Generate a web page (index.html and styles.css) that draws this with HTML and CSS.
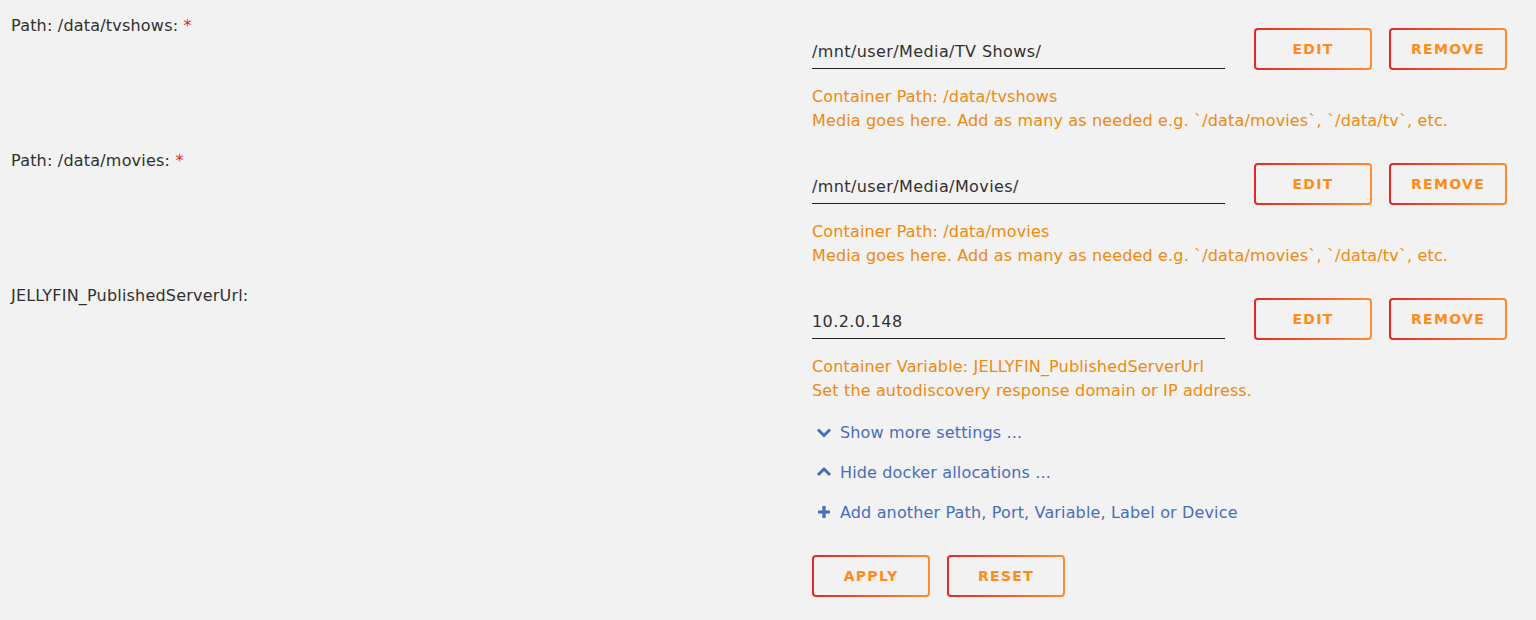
FILE: index.html
```html
<!DOCTYPE html>
<html lang="en">
<head>
  <meta charset="UTF-8" />
  <title>Docker Container - Jellyfin</title>
  <link rel="stylesheet" href="styles.css">
</head>
<body>

  <div class="settings">

    <div class="setting-row">
      <div class="setting-label">Path: /data/tvshows: <span class="required">*</span></div>
      <div class="setting-value">
        <div class="value-line">
          <input class="text-input" type="text" value="/mnt/user/Media/TV Shows/">
          <button class="btn">Edit</button>
          <button class="btn">Remove</button>
        </div>
        <div class="help">
          Container Path: /data/tvshows<br>
          Media goes here. Add as many as needed e.g. `/data/movies`, `/data/tv`, etc.
        </div>
      </div>
    </div>

    <div class="setting-row">
      <div class="setting-label">Path: /data/movies: <span class="required">*</span></div>
      <div class="setting-value">
        <div class="value-line">
          <input class="text-input" type="text" value="/mnt/user/Media/Movies/">
          <button class="btn">Edit</button>
          <button class="btn">Remove</button>
        </div>
        <div class="help">
          Container Path: /data/movies<br>
          Media goes here. Add as many as needed e.g. `/data/movies`, `/data/tv`, etc.
        </div>
      </div>
    </div>

    <div class="setting-row">
      <div class="setting-label">JELLYFIN_PublishedServerUrl:</div>
      <div class="setting-value">
        <div class="value-line">
          <input class="text-input" type="text" value="10.2.0.148">
          <button class="btn">Edit</button>
          <button class="btn">Remove</button>
        </div>
        <div class="help">
          Container Variable: JELLYFIN_PublishedServerUrl<br>
          Set the autodiscovery response domain or IP address.
        </div>
      </div>
    </div>

    <div class="setting-row">
      <div class="setting-label"></div>
      <div class="setting-value links">
        <a href="#" class="link">
          <svg viewBox="0 0 16 16" width="16" height="16"><path d="M2 5.5 L8 11.5 L14 5.5" fill="none" stroke="currentColor" stroke-width="3"/></svg>
          Show more settings ...
        </a>
        <a href="#" class="link">
          <svg viewBox="0 0 16 16" width="16" height="16"><path d="M2 11 L8 5 L14 11" fill="none" stroke="currentColor" stroke-width="3"/></svg>
          Hide docker allocations ...
        </a>
        <a href="#" class="link">
          <svg viewBox="0 0 16 16" width="16" height="16"><path d="M8 2 V14 M2 8 H14" fill="none" stroke="currentColor" stroke-width="3.2"/></svg>
          Add another Path, Port, Variable, Label or Device
        </a>

        <div class="actions">
          <button class="btn">Apply</button>
          <button class="btn">Reset</button>
        </div>
      </div>
    </div>

  </div>

</body>
</html>
```

FILE: styles.css
```css
body {
  margin: 0;
  font-family: "DejaVu Sans", "Noto Sans", Arial, sans-serif;
  background-color: #f2f2f2;
  color: #303030;
}

.settings {
  padding-top: 15px;
}

.setting-row {
  display: grid;
  grid-template-columns: 812px 1fr;
  margin-bottom: 17px;
}

.setting-label {
  padding-left: 11px;
  font-size: 16px;
  line-height: 22px;
  letter-spacing: 0.2px;
}

.required {
  color: #e22828;
}

.setting-value {
  padding-top: 13px;
}

.value-line {
  display: flex;
  align-items: flex-start;
}

.text-input {
  width: 413px;
  height: 41px;
  box-sizing: border-box;
  padding: 6px 0 0 0;
  border: none;
  border-bottom: 1px solid #222;
  background: transparent;
  font-family: inherit;
  font-size: 16px;
  letter-spacing: 0.4px;
  color: #303030;
  outline: none;
  margin-right: 29px;
}

.btn {
  width: 118px;
  height: 42px;
  margin-right: 17px;
  border: 2px solid transparent;
  border-radius: 4px;
  background: linear-gradient(#f2f2f2, #f2f2f2) padding-box,
              linear-gradient(90deg, #e22828, #ff8c2f) border-box;
  color: #ff8c1a;
  font-family: inherit;
  font-size: 14px;
  font-weight: bold;
  letter-spacing: 1.3px;
  text-transform: uppercase;
  cursor: pointer;
}

.help {
  margin-top: 15px;
  color: #f0890c;
  font-size: 16px;
  line-height: 24px;
  letter-spacing: 0.15px;
}

.links {
  padding-top: 0;
  margin-top: -8px;
}

.link {
  display: flex;
  align-items: center;
  height: 40px;
  padding-left: 4px;
  color: #486dba;
  text-decoration: none;
  font-size: 16px;
  letter-spacing: 0.15px;
}

.link svg {
  margin-right: 8px;
}

.actions {
  display: flex;
  margin-top: 23px;
}
```
